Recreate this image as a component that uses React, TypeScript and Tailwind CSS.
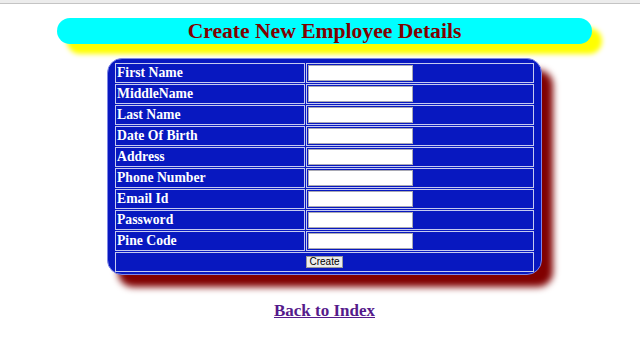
import React from "react";

const labels = [
  "First Name",
  "MiddleName",
  "Last Name",
  "Date Of Birth",
  "Address",
  "Phone Number",
  "Email Id",
  "Password",
  "Pine Code",
];

export default function App() {
  return (
    <div className="w-[640px] h-[357px] bg-white overflow-hidden" style={{ fontFamily: '"Liberation Serif", "Times New Roman", serif' }}>
      <div className="h-[3px] bg-[#ececec]" />
      <div className="h-[1px] bg-[#c4c4c4]" />
      <div className="pt-[14px] pl-[57px]">
        <div className="w-[535px] h-[26px] rounded-[13px] bg-[#00ffff] shadow-[10px_10px_5px_#ffff00] flex items-center justify-center">
          <h1 className="text-[21.6px] leading-none font-bold text-[#800000] pt-[1px]">Create New Employee Details</h1>
        </div>
      </div>
      <div className="pt-[14px] pl-[107px]">
        <div className="w-[435px] rounded-[15px] border border-[#7f88e6] bg-[#0818c0] shadow-[11px_12px_7px_#800000] px-[6px] pt-[3px] pb-[1px]">
          <table className="w-[421px] border-separate border-spacing-[1px]">
            <tbody>
              {labels.map((l) => (
                <tr key={l}>
                  <td className="w-[190px] h-[20px] border border-[#c6caf0] p-[1px] align-middle text-white font-bold text-[13.7px] leading-[16px] whitespace-nowrap">
                    {l}
                  </td>
                  <td className="h-[20px] border border-[#c6caf0] p-[1px] align-middle">
                    <input
                      type="text"
                      className="block w-[105px] h-[16px] bg-white border border-[#a9a9b4] outline-none"
                    />
                  </td>
                </tr>
              ))}
              <tr>
                <td colSpan={2} className="h-[20px] border border-[#c6caf0] p-[1px] align-middle leading-none">
                  <div className="h-[16px] flex items-center justify-center">
                    <button
                      className="flex items-center justify-center h-[12px] px-[2px] bg-[#ececec] border border-[#9a9a9a] text-black text-[10px] leading-none"
                      style={{ fontFamily: '"Liberation Sans", Arial, sans-serif' }}
                    >
                      Create
                    </button>
                  </div>
                </td>
              </tr>
            </tbody>
          </table>
        </div>
      </div>
      <div className="pt-[24px] text-center pl-[9px]">
        <a href="#" className="text-[17px] leading-[20px] font-bold underline text-[#551a8b]">
          Back to Index
        </a>
      </div>
    </div>
  );
}
